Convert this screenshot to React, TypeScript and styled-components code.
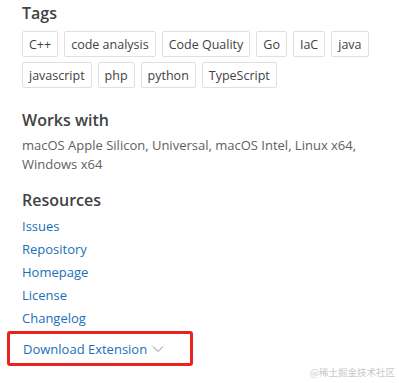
import React from "react";
import styled, { createGlobalStyle } from "styled-components";

const Global = createGlobalStyle`
  html, body { margin: 0; padding: 0; background: #ffffff; }
  body { font-family: "Open Sans", "Noto Sans", "Liberation Sans", sans-serif; }
`;

const Page = styled.div`
  position: relative;
  width: 399px;
  height: 383px;
  padding: 3px 0 0 22px;
  box-sizing: border-box;
  overflow: hidden;
`;

const Section = styled.section<{ $gap?: number }>`
  margin-bottom: ${(p) => p.$gap ?? 0}px;
`;

const Heading = styled.h2`
  margin: 0;
  font-size: 16px;
  line-height: 20px;
  font-weight: 600;
  color: #424242;
`;

const TagList = styled.div`
  display: flex;
  flex-wrap: wrap;
  gap: 5px 6px;
  margin-top: 8px;
  width: 370px;
`;

const Tag = styled.span`
  display: inline-flex;
  align-items: center;
  height: 26px;
  padding: 0 6px;
  box-sizing: border-box;
  border: 1px solid #e0e0e0;
  border-radius: 2px;
  font-size: 12.5px;
  color: #424242;
`;

const Text = styled.p`
  margin: 6px 0 0;
  font-size: 13px;
  line-height: 19px;
  color: #616161;
  width: 360px;
`;

const LinkList = styled.div`
  display: flex;
  flex-direction: column;
  margin-top: 5px;
`;

const Link = styled.a`
  font-size: 13px;
  line-height: 23px;
  color: #1a6fb8;
  text-decoration: none;
`;

const DownloadBox = styled.div`
  display: flex;
  align-items: center;
  gap: 5px;
  width: 186px;
  height: 35px;
  margin: 1px 0 0 -15px;
  padding-left: 13px;
  box-sizing: border-box;
  border: 3px solid #e8221c;
  border-radius: 3px;
  font-size: 13px;
  color: #1a6fb8;
`;

const Watermark = styled.div`
  position: absolute;
  right: 4px;
  bottom: 4px;
  font-family: "Noto Sans CJK SC", sans-serif;
  font-size: 9.5px;
  color: #c8c8c8;
`;

const tags = [
  "C++",
  "code analysis",
  "Code Quality",
  "Go",
  "IaC",
  "java",
  "javascript",
  "php",
  "python",
  "TypeScript",
];

const links = ["Issues", "Repository", "Homepage", "License", "Changelog"];

export default function App() {
  return (
    <>
      <Global />
      <Page>
        <Section $gap={22}>
          <Heading>Tags</Heading>
          <TagList>
            {tags.map((t) => (
              <Tag key={t}>{t}</Tag>
            ))}
          </TagList>
        </Section>
        <Section $gap={16}>
          <Heading>Works with</Heading>
          <Text>
            macOS Apple Silicon, Universal, macOS Intel, Linux x64, Windows x64
          </Text>
        </Section>
        <Section>
          <Heading>Resources</Heading>
          <LinkList>
            {links.map((l) => (
              <Link key={l} href="#">
                {l}
              </Link>
            ))}
          </LinkList>
          <DownloadBox>
            Download Extension
            <svg width="12" height="8" viewBox="0 0 12 8" fill="none">
              <path d="M1 1.5l5 5 5-5" stroke="#8a8a8a" strokeWidth="1" />
            </svg>
          </DownloadBox>
        </Section>
        <Watermark>@稀土掘金技术社区</Watermark>
      </Page>
    </>
  );
}
